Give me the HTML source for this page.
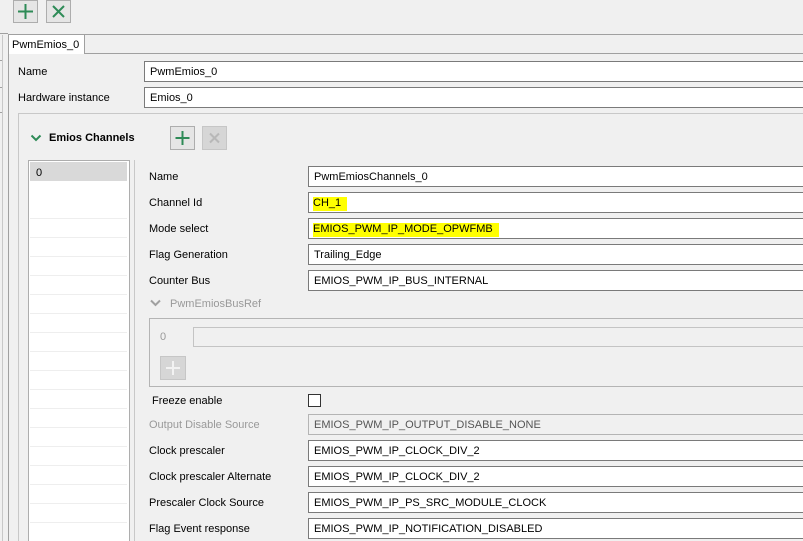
<!DOCTYPE html>
<html style="overflow:hidden;width:803px;height:541px"><head><style>
*{box-sizing:border-box;margin:0;padding:0}
body{width:803px;height:541px;overflow:hidden;background:#f0f0f0;font-family:"Liberation Sans",sans-serif;font-size:11px;color:#000;position:relative}
.a{position:absolute}
.btn{position:absolute;width:25px;height:24px;border:1px solid #adadad;background:#e5e5e5}
.in{position:absolute;height:21px;border:1px solid #7a7a7a;background:#fff;padding:4px 0 0 5px;white-space:nowrap;overflow:hidden}
.lb{position:absolute;white-space:nowrap}
.hl{background:#ffff00;padding:0 6px 2px 0}
</style></head><body>
<div class="btn" style="left:13px;top:0px;height:23px"></div>
<svg class="a" style="left:13px;top:0" width="25" height="23"><path d="M12.5 4v15M5 11.5h15" stroke="#2e8b57" stroke-width="2"/></svg>
<div class="btn" style="left:46px;top:0px;height:23px"></div>
<svg class="a" style="left:46px;top:0" width="25" height="23"><path d="M7 6l11 11M18 6L7 17" stroke="#2e8b57" stroke-width="2"/></svg>
<div class="a" style="left:0;top:33px;width:8px;height:1px;background:#a0a0a0"></div>
<div class="a" style="left:0;top:60px;width:3px;height:1px;background:#a0a0a0"></div>
<div class="a" style="left:0;top:87px;width:3px;height:1px;background:#a0a0a0"></div>
<div class="a" style="left:0;top:112px;width:3px;height:1px;background:#a0a0a0"></div>
<div class="a" style="left:2px;top:35px;width:1px;height:506px;background:#c8c8c8"></div>
<div class="a" style="left:8px;top:34px;width:795px;height:1px;background:#a0a0a0"></div>
<div class="a" style="left:8px;top:34px;width:1px;height:507px;background:#a0a0a0"></div>
<div class="a" style="left:8px;top:53px;width:795px;height:1px;background:#a0a0a0"></div>
<div class="a" style="left:8px;top:35px;width:77px;height:19px;background:#fff;border-right:1px solid #a0a0a0;border-left:1px solid #a0a0a0"></div>
<div class="lb" style="left:12px;top:39px">PwmEmios_0</div>
<div class="lb" style="left:18px;top:66px">Name</div>
<div class="in" style="left:144px;top:61px;width:670px">PwmEmios_0</div>
<div class="lb" style="left:18px;top:92px">Hardware instance</div>
<div class="in" style="left:144px;top:87px;width:670px">Emios_0</div>
<div class="a" style="left:18px;top:113px;width:790px;height:428px;border:1px solid #c8c8c8;border-right:none;border-bottom:none"></div>
<svg class="a" style="left:30px;top:133px" width="12" height="10"><path d="M1.5 2.5l4.5 4.5 4.5-4.5" stroke="#2e8b57" stroke-width="2" fill="none"/></svg>
<div class="lb" style="left:49px;top:132px;font-weight:bold">Emios Channels</div>
<div class="btn" style="left:170px;top:126px"></div>
<svg class="a" style="left:170px;top:126px" width="25" height="24"><path d="M12.5 5v14M5.5 12h14" stroke="#2e8b57" stroke-width="2"/></svg>
<div class="btn" style="left:202px;top:126px;background:#d6d6d6;border-color:#c6c6c6"></div>
<svg class="a" style="left:202px;top:126px" width="25" height="24"><path d="M8 7.5l9 9M17 7.5l-9 9" stroke="#b8b8b8" stroke-width="2"/></svg>
<div class="a" style="left:28px;top:160px;width:102px;height:381px;background:#fff;border:1px solid #adadad;border-bottom:none"></div>
<div class="a" style="left:30px;top:162px;width:97px;height:19px;background:#d9d9d9"></div>
<div class="lb" style="left:36px;top:167px">0</div>
<div class="a" style="left:30px;top:200px;width:97px;height:341px;background:repeating-linear-gradient(#fff 0 18px,#eee 18px 19px)"></div>
<div class="a" style="left:134px;top:160px;width:1px;height:381px;background:#c8c8c8"></div>
<div class="lb" style="left:149px;top:171px">Name</div>
<div class="in" style="left:308px;top:166px;width:500px">PwmEmiosChannels_0</div>
<div class="lb" style="left:149px;top:197px">Channel Id</div>
<div class="in" style="left:308px;top:192px;width:500px;padding-left:4px"><span class="hl">CH_1</span></div>
<div class="lb" style="left:149px;top:223px">Mode select</div>
<div class="in" style="left:308px;top:218px;width:500px;padding-left:4px"><span class="hl">EMIOS_PWM_IP_MODE_OPWFMB</span></div>
<div class="lb" style="left:149px;top:249px">Flag Generation</div>
<div class="in" style="left:308px;top:244px;width:500px">Trailing_Edge</div>
<div class="lb" style="left:149px;top:275px">Counter Bus</div>
<div class="in" style="left:308px;top:270px;width:500px">EMIOS_PWM_IP_BUS_INTERNAL</div>
<svg class="a" style="left:150px;top:299px" width="11" height="8"><path d="M1 1.5l4.5 4.5 4.5-4.5" stroke="#a0a0a0" stroke-width="2" fill="none"/></svg>
<div class="lb" style="left:170px;top:298px;color:#999">PwmEmiosBusRef</div>
<div class="a" style="left:149px;top:318px;width:660px;height:69px;border:1px solid #b4b4b4"></div>
<div class="lb" style="left:160px;top:331px;color:#999">0</div>
<div class="a" style="left:193px;top:327px;width:620px;height:20px;border:1px solid #c4c4c4"></div>
<div class="a" style="left:160px;top:356px;width:26px;height:24px;background:#d6d6d6;border:1px solid #c6c6c6"></div>
<svg class="a" style="left:160px;top:356px" width="26" height="24"><path d="M13 5v14M6 12h14" stroke="#f2f2f2" stroke-width="2"/></svg>
<div class="lb" style="left:152px;top:395px">Freeze enable</div>
<div class="a" style="left:308px;top:394px;width:13px;height:13px;border:1px solid #333;background:#fff"></div>
<div class="lb" style="left:149px;top:419px;color:#999">Output Disable Source</div>
<div class="in" style="left:308px;top:414px;width:500px;background:#f0f0f0;border-color:#b4b4b4;color:#555">EMIOS_PWM_IP_OUTPUT_DISABLE_NONE</div>
<div class="lb" style="left:149px;top:445px">Clock prescaler</div>
<div class="in" style="left:308px;top:440px;width:500px">EMIOS_PWM_IP_CLOCK_DIV_2</div>
<div class="lb" style="left:149px;top:471px">Clock prescaler Alternate</div>
<div class="in" style="left:308px;top:466px;width:500px">EMIOS_PWM_IP_CLOCK_DIV_2</div>
<div class="lb" style="left:149px;top:497px">Prescaler Clock Source</div>
<div class="in" style="left:308px;top:492px;width:500px">EMIOS_PWM_IP_PS_SRC_MODULE_CLOCK</div>
<div class="lb" style="left:149px;top:523px">Flag Event response</div>
<div class="in" style="left:308px;top:518px;width:500px">EMIOS_PWM_IP_NOTIFICATION_DISABLED</div>
</body></html>
